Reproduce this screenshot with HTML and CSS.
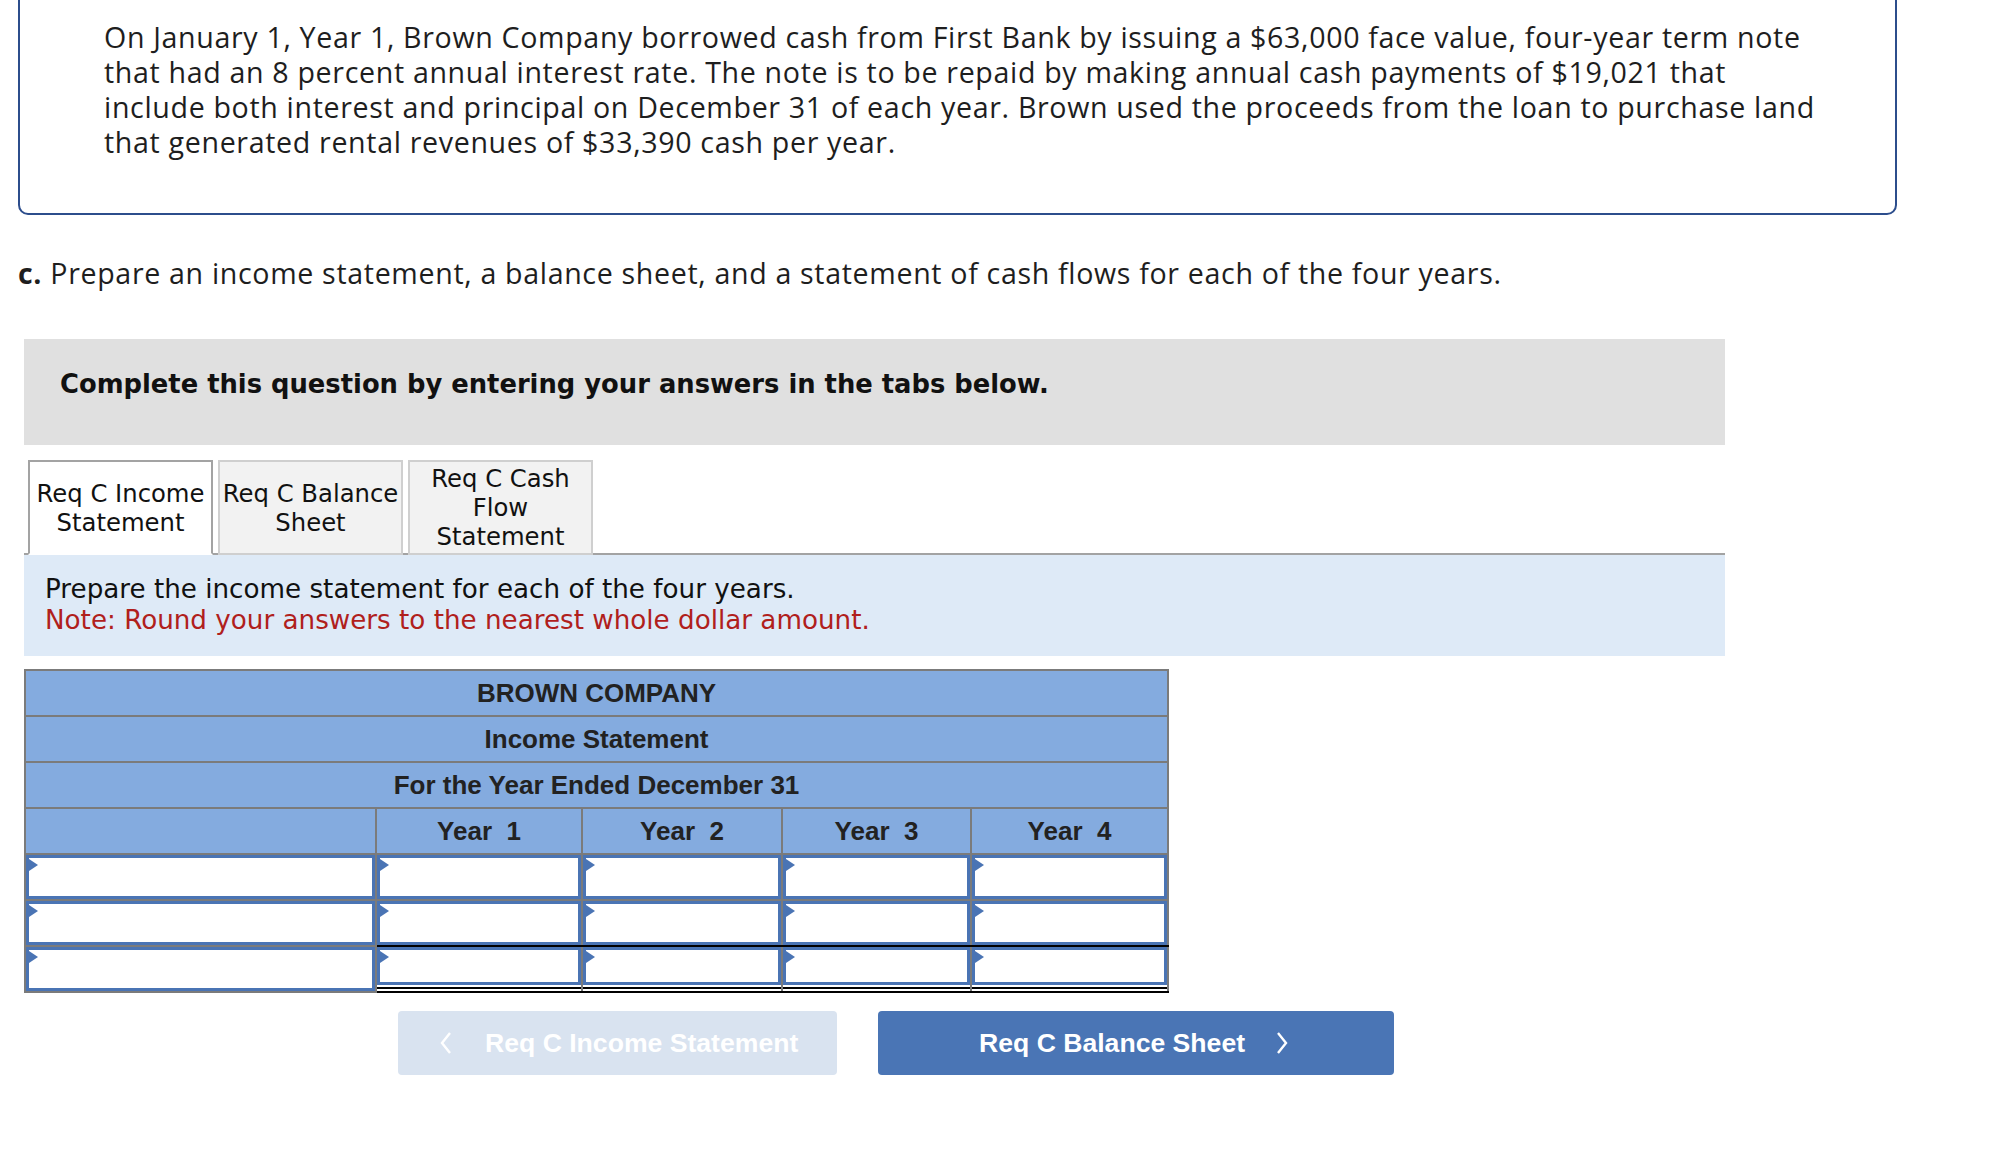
FILE: index.html
```html
<!DOCTYPE html>
<html lang="en">
<head>
<meta charset="utf-8">
<title>Brown Company - Req C</title>
<link rel="stylesheet" href="styles.css">
</head>
<body>
<div class="problem">
  <p>On January 1, Year 1, Brown Company borrowed cash from First Bank by issuing a $63,000 face value, four-year term note<br>that had an 8 percent annual interest rate. The note is to be repaid by making annual cash payments of $19,021 that<br>include both interest and principal on December 31 of each year. Brown used the proceeds from the loan to purchase land<br>that generated rental revenues of $33,390 cash per year.</p>
</div>

<p class="req"><b>c.</b> Prepare an income statement, a balance sheet, and a statement of cash flows for each of the four years.</p>

<div class="instructions">Complete this question by entering your answers in the tabs below.</div>

<div class="tabs">
  <div class="tab active">Req C Income<br>Statement</div>
  <div class="tab">Req C Balance<br>Sheet</div>
  <div class="tab">Req C Cash<br>Flow<br>Statement</div>
</div>

<div class="panel">
  <p>Prepare the income statement for each of the four years.</p>
  <p class="note">Note: Round your answers to the nearest whole dollar amount.</p>
</div>

<table class="stmt">
  <colgroup>
    <col class="c-label"><col class="c-y1"><col class="c-y2"><col class="c-y3"><col class="c-y4">
  </colgroup>
  <tr class="hd"><th colspan="5">BROWN COMPANY</th></tr>
  <tr class="hd"><th colspan="5">Income Statement</th></tr>
  <tr class="hd"><th colspan="5">For the Year Ended December 31</th></tr>
  <tr class="hd years"><th></th><th>Year&nbsp; 1</th><th>Year&nbsp; 2</th><th>Year&nbsp; 3</th><th>Year&nbsp; 4</th></tr>
  <tr class="row">
    <td><div class="inp"></div></td><td><div class="inp"></div></td><td><div class="inp"></div></td><td><div class="inp"></div></td><td><div class="inp"></div></td>
  </tr>
  <tr class="row sub">
    <td><div class="inp"></div></td><td class="num"><div class="inp"></div></td><td class="num"><div class="inp"></div></td><td class="num"><div class="inp"></div></td><td class="num"><div class="inp"></div></td>
  </tr>
  <tr class="row total">
    <td><div class="inp"></div></td><td class="num"><div class="inp"></div></td><td class="num"><div class="inp"></div></td><td class="num"><div class="inp"></div></td><td class="num"><div class="inp"></div></td>
  </tr>
</table>

<div class="nav">
  <button class="btn prev" type="button">
    <svg class="chev" viewBox="0 0 14 24" width="14" height="24"><polyline points="11,2 3,12 11,22" fill="none" stroke="#fff" stroke-width="2.4"/></svg>
    <span>Req C Income Statement</span>
  </button>
  <button class="btn next" type="button">
    <span>Req C Balance Sheet</span>
    <svg class="chev" viewBox="0 0 14 24" width="14" height="24"><polyline points="3,2 11,12 3,22" fill="none" stroke="#fff" stroke-width="2.4"/></svg>
  </button>
</div>
</body>
</html>
```

FILE: styles.css
```css
html, body {
  margin: 0;
  padding: 0;
  background: #fff;
}

body {
  font-family: "Open Sans", "Lato", sans-serif;
  color: #1e1e1e;
  overflow: hidden;
}

p { margin: 0; }

.problem {
  box-sizing: border-box;
  width: 1879px;
  margin: -20px 0 0 18px;
  border: 2px solid #2c4d8c;
  border-radius: 0 0 10px 10px;
  padding: 37px 20px 54px 84px;
}

.problem p {
  font-size: 28.6px;
  line-height: 35px;
  letter-spacing: 0.66px;
  white-space: nowrap;
}

.req {
  margin: 40px 0 0 18px;
  font-size: 28.6px;
  line-height: 35px;
  letter-spacing: 0.66px;
  white-space: nowrap;
}

.instructions {
  box-sizing: border-box;
  width: 1701px;
  height: 106px;
  margin: 49px 0 0 24px;
  background: #e0e0e0;
  padding: 29px 0 0 36px;
  font-family: "DejaVu Sans", Verdana, sans-serif;
  font-weight: bold;
  font-size: 25.8px;
  line-height: 32px;
  color: #111;
  white-space: nowrap;
}

.tabs {
  box-sizing: border-box;
  width: 1701px;
  margin: 15px 0 0 24px;
  padding-left: 4px;
  display: flex;
  gap: 5px;
  border-bottom: 2px solid #a3a3a3;
}

.tab {
  box-sizing: border-box;
  width: 185px;
  height: 95px;
  margin-bottom: -2px;
  border: 2px solid #cfcfcf;
  background: #f2f2f2;
  display: flex;
  align-items: center;
  justify-content: center;
  text-align: center;
  font-family: "DejaVu Sans", Verdana, sans-serif;
  font-size: 24.3px;
  line-height: 29px;
  color: #111;
  white-space: nowrap;
}

.tab.active {
  background: #fff;
  border-color: #a3a3a3;
  border-bottom: 2px solid #fff;
}

.panel {
  box-sizing: border-box;
  width: 1701px;
  height: 101px;
  margin-left: 24px;
  background: #deeaf7;
  padding: 19px 0 0 21px;
  font-family: "DejaVu Sans", Verdana, sans-serif;
  font-size: 26.2px;
  line-height: 31px;
  color: #111;
  white-space: nowrap;
}

.panel .note {
  color: #b0201c;
}

.stmt {
  margin: 13px 0 0 24px;
  border-collapse: collapse;
  table-layout: fixed;
  width: 1143px;
  font-family: "Liberation Sans", Arial, sans-serif;
}

.c-label { width: 351px; }
.c-y1 { width: 206px; }
.c-y2 { width: 200px; }
.c-y3 { width: 189px; }
.c-y4 { width: 197px; }

.stmt th,
.stmt td {
  border: 2px solid #7b7b7b;
  padding: 0;
  height: 44px;
  vertical-align: top;
}

.hd th {
  background: #84abdf;
  font-size: 26px;
  font-weight: bold;
  color: #222;
  text-align: center;
  vertical-align: middle;
}

.row td {
  background: #fff;
}

.inp {
  position: relative;
  box-sizing: border-box;
  height: 44px;
  border: 3px solid #4a74b4;
  background: #fff;
}

.inp::before {
  content: "";
  position: absolute;
  left: -3px;
  top: -1px;
  border-left: 12px solid #4a74b4;
  border-top: 8px solid transparent;
  border-bottom: 8px solid transparent;
}

.sub td.num { border-bottom-color: #000; }

.total td.num { border-bottom-color: #000; }

.total td.num .inp {
  height: 38px;
  box-shadow: 0 2px 0 #fff, 0 4px 0 #000;
}

.nav {
  display: flex;
  gap: 41px;
  margin: 18px 0 0 398px;
}

.btn {
  box-sizing: border-box;
  height: 64px;
  border: none;
  border-radius: 4px;
  font-family: "Liberation Sans", Arial, sans-serif;
  font-weight: bold;
  font-size: 26.6px;
  color: #fff;
  display: flex;
  align-items: center;
  padding: 0;
}

.prev {
  width: 439px;
  background: #d9e3f0;
  padding-left: 41px;
  gap: 32px;
}

.next {
  width: 516px;
  background: #4a75b5;
  padding-left: 101px;
  gap: 30px;
}

.chev { display: block; }
```
